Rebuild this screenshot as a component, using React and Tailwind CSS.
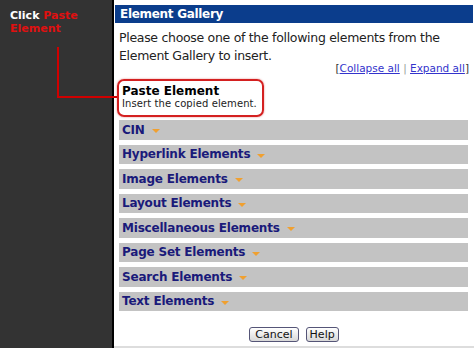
import React from 'react'

const groups = [
  'CIN',
  'Hyperlink Elements',
  'Image Elements',
  'Layout Elements',
  'Miscellaneous Elements',
  'Page Set Elements',
  'Search Elements',
  'Text Elements',
]

function Caret() {
  return (
    <svg width="8" height="6" viewBox="0 0 8 6" className="ml-[7px] mt-[3px]">
      <path d="M0 1 L8 1 L4 5 Z" fill="#f0a030" />
    </svg>
  )
}

export default function App() {
  return (
    <div className="relative flex h-[348px] w-[474px] overflow-hidden bg-[#333333] font-['DejaVu_Sans',sans-serif]">
      {/* left annotation */}
      <div className="w-[112px] shrink-0 pl-[10px] pt-[9px] text-[11px] font-bold leading-[13px]">
        <div>
          <span className="text-white">Click</span> <span className="text-[#e01010]">Paste</span>
        </div>
        <div className="text-[#e01010]">Element</div>
      </div>
      <div className="absolute left-[57px] top-[47px] h-[51px] w-[2px] bg-[#d00000]" />
      <div className="absolute left-[57px] top-[96px] h-[2px] w-[60px] bg-[#d00000]" />

      {/* dialog */}
      <div className="flex flex-1 flex-col border-l-2 border-black bg-white">
        <div className="mx-[1px] mt-[5px] flex h-[18px] items-center bg-[#0b3d8c] px-[5px] text-[12px] font-bold tracking-[-0.3px] text-white">
          Element Gallery
        </div>
        <div className="flex flex-1 flex-col px-[5px]">
          <p className="mt-[6px] text-[12.5px] leading-[18px] tracking-[-0.3px] text-[#222]">
            Please choose one of the following elements from the Element Gallery to insert.
          </p>
          <div className="-mt-[3px] text-right text-[10.5px] leading-[13px] text-[#333]">
            [<span className="text-[#3333cc] underline">Collapse all</span>
            <span className="text-[#999]"> | </span>
            <span className="text-[#3333cc] underline">Expand all</span>]
          </div>
          <div className="-ml-[2px] mt-[4px] w-[147px] whitespace-nowrap rounded-[7px] border-2 border-[#d42020] pb-[5px] pl-[3px] pt-[3px] shadow-[0_0_2px_rgba(200,0,0,0.5)]">
            <div className="text-[12px] font-bold leading-[14px] text-black">Paste Element</div>
            <div className="text-[10px] leading-[12px] tracking-[0.1px] text-[#222]">Insert the copied element.</div>
          </div>
          <div className="mt-[3px] flex flex-col gap-[5px] pr-[1px]">
            {groups.map((g) => (
              <div key={g} className="flex h-[19.5px] items-center bg-[#c3c3c3] px-[3px] text-[12px] font-bold tracking-[-0.2px] text-[#1a1a7a]">
                {g}
                <Caret />
              </div>
            ))}
          </div>
          <div className="mt-[16px] flex justify-center gap-[7px]">
            <button className="h-[15px] rounded-[3px] border border-[#557] bg-gradient-to-b from-white to-[#d8d8d8] px-[5px] text-[11px] leading-[13px] text-[#111]">
              Cancel
            </button>
            <button className="h-[15px] rounded-[3px] border border-[#557] bg-gradient-to-b from-white to-[#d8d8d8] px-[3px] text-[11px] leading-[13px] text-[#111]">
              Help
            </button>
          </div>
        </div>
        <div className="h-[2px] bg-[#ddd]" />
      </div>
    </div>
  )
}
